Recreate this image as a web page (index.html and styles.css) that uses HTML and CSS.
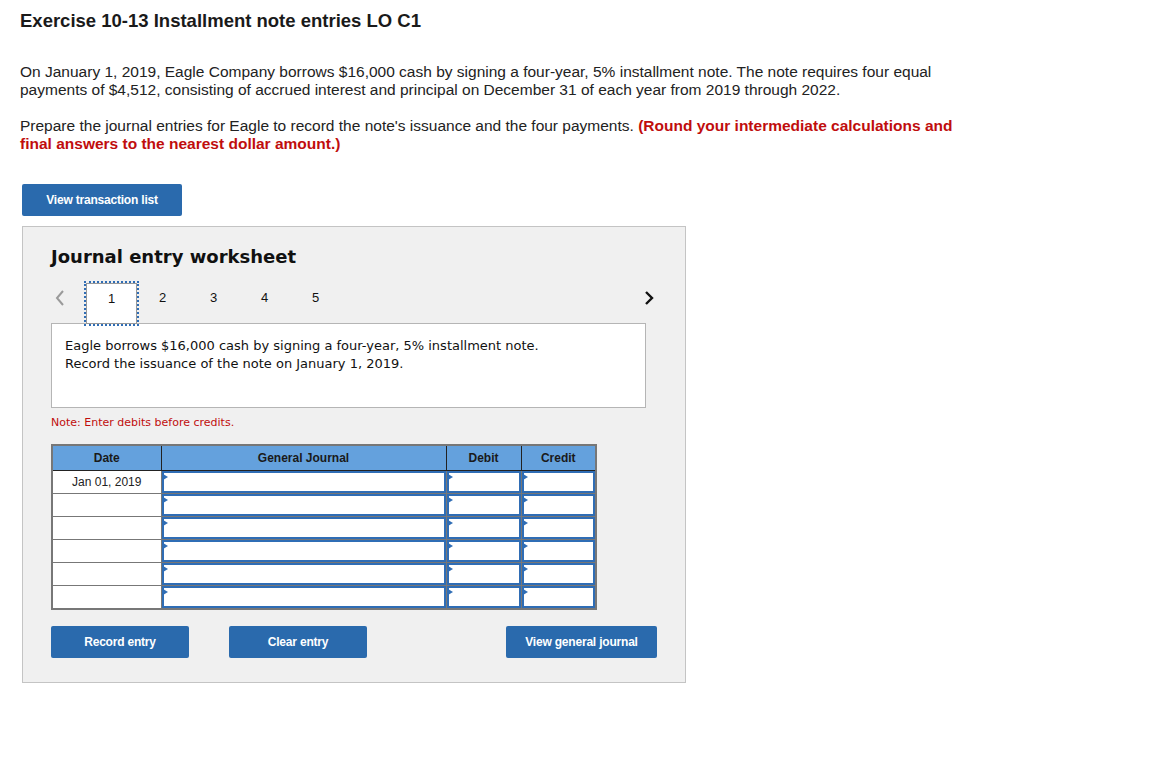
FILE: index.html
```html
<!DOCTYPE html>
<html>
<head>
<meta charset="utf-8">
<link rel="stylesheet" href="styles.css">
</head>
<body>
<div class="page">
  <h1 class="title">Exercise 10-13 Installment note entries LO C1</h1>
  <p class="para">On January 1, 2019, Eagle Company borrows $16,000 cash by signing a four-year, 5% installment note. The note requires four equal payments of $4,512, consisting of accrued interest and principal on December 31 of each year from 2019 through 2022.</p>
  <p class="para para2">Prepare the journal entries for Eagle to record the note's issuance and the four payments. <strong class="red">(Round your intermediate calculations and final answers to the nearest dollar amount.)</strong></p>
  <button class="btn btn-list">View transaction list</button>

  <div class="panel">
    <h2 class="ws-title">Journal entry worksheet</h2>
    <div class="pager">
      <span class="chev chev-left"><svg width="12" height="18" viewBox="0 0 12 18"><polyline points="9,2 3,9 9,16" fill="none" stroke="#9a9a9a" stroke-width="2"/></svg></span>
      <span class="tab tab-active">1</span>
      <span class="tab">2</span>
      <span class="tab">3</span>
      <span class="tab">4</span>
      <span class="tab">5</span>
      <span class="chev chev-right"><svg width="12" height="16" viewBox="0 0 12 16"><polyline points="3,2 9,8 3,14" fill="none" stroke="#111" stroke-width="2.4"/></svg></span>
    </div>
    <div class="desc">
      Eagle borrows $16,000 cash by signing a four-year, 5% installment note.<br>
      Record the issuance of the note on January 1, 2019.
    </div>
    <p class="note">Note: Enter debits before credits.</p>
    <table class="journal">
      <colgroup><col class="c-date"><col class="c-gj"><col class="c-amt"><col class="c-amt"></colgroup>
      <thead>
        <tr><th>Date</th><th>General Journal</th><th>Debit</th><th>Credit</th></tr>
      </thead>
      <tbody>
        <tr><td class="date">Jan 01, 2019</td><td><div class="inp"></div></td><td><div class="inp"></div></td><td><div class="inp"></div></td></tr>
        <tr><td class="date"></td><td><div class="inp"></div></td><td><div class="inp"></div></td><td><div class="inp"></div></td></tr>
        <tr><td class="date"></td><td><div class="inp"></div></td><td><div class="inp"></div></td><td><div class="inp"></div></td></tr>
        <tr><td class="date"></td><td><div class="inp"></div></td><td><div class="inp"></div></td><td><div class="inp"></div></td></tr>
        <tr><td class="date"></td><td><div class="inp"></div></td><td><div class="inp"></div></td><td><div class="inp"></div></td></tr>
        <tr><td class="date"></td><td><div class="inp"></div></td><td><div class="inp"></div></td><td><div class="inp"></div></td></tr>
      </tbody>
    </table>
    <div class="actions">
      <button class="btn btn-act">Record entry</button>
      <button class="btn btn-act">Clear entry</button>
      <button class="btn btn-act btn-view">View general journal</button>
    </div>
  </div>
</div>
</body>
</html>
```

FILE: styles.css
```css
* { box-sizing: border-box; }
body {
  margin: 0;
  background: #fff;
  color: #1a1a1a;
  font-family: "Liberation Sans", Arial, sans-serif;
}
.page {
  padding: 11px 0 0 20px;
}
.title {
  margin: 0;
  font-size: 18.5px;
  line-height: 20px;
  font-weight: bold;
  color: #1a1a1a;
}
.para {
  margin: 32px 0 0;
  width: 940px;
  font-size: 15.5px;
  line-height: 18px;
  color: #222;
}
.para2 { margin-top: 18px; }
.red { color: #c00d0d; font-weight: bold; }
.btn {
  display: block;
  border: none;
  border-radius: 2px;
  background: #2a6aad;
  color: #fff;
  font-family: "Liberation Sans", Arial, sans-serif;
  font-weight: bold;
  font-size: 12px;
  height: 32px;
  padding: 0;
  letter-spacing: -0.2px;
}
.btn-list {
  margin: 31px 0 0 2px;
  width: 160px;
}
.panel {
  margin: 10px 0 0 2px;
  width: 664px;
  background: #f0f0f0;
  border: 1px solid #c4c4c4;
  padding: 19px 39px 24px 28px;
}
.ws-title {
  margin: 0;
  font-family: "DejaVu Sans", Verdana, sans-serif;
  font-size: 18px;
  line-height: 22px;
  font-weight: bold;
  color: #111;
}
.pager {
  display: flex;
  align-items: flex-start;
  height: 42px;
  margin-top: 13px;
  width: calc(100% + 16px);
  font-family: "Liberation Sans", Arial, sans-serif;
  font-size: 13px;
  color: #111;
}
.chev {
  display: flex;
  align-items: center;
  height: 34px;
}
.chev-left { width: 35px; padding-left: 3px; }
.chev-right { margin-left: auto; padding-right: 7px; }
.tab {
  width: 51px;
  height: 32px;
  padding-top: 10px;
  text-align: center;
  line-height: 14px;
}
.tab-active {
  position: relative;
  z-index: 1;
  margin-top: 2px;
  height: 41px;
  padding-top: 8px;
  background: #fff;
  border: 1px solid #999;
  outline: 2px dotted #2f6db5;
}
.desc {
  height: 85px;
  background: #fff;
  border: 1px solid #b5b5b5;
  padding: 13px 13px 0;
  font-family: "DejaVu Sans", Verdana, sans-serif;
  font-size: 13px;
  line-height: 18px;
  color: #111;
}
.note {
  margin: 8px 0 0;
  font-family: "DejaVu Sans", Verdana, sans-serif;
  font-size: 11px;
  line-height: 14px;
  color: #c00d0d;
}
.journal {
  margin-top: 14px;
  width: 544px;
  border-collapse: collapse;
  table-layout: fixed;
  border: 2px solid #777;
  font-family: "Liberation Sans", Arial, sans-serif;
  font-size: 12px;
}
.c-date { width: 109px; }
.c-gj { width: 285px; }
.c-amt { width: 75px; }
.journal th {
  height: 25px;
  background: #64a1dd;
  border: 1px solid #222;
  border-top: 2px solid #777;
  font-weight: bold;
  color: #1a1a1a;
  padding: 0;
}
.journal th:first-child { border-left: 2px solid #777; }
.journal th:last-child { border-right: 2px solid #777; }
.journal td {
  height: 23px;
  padding: 0;
  border: 1px solid #777;
  background: #fff;
}
.journal td.date {
  text-align: center;
  color: #222;
  font-size: 12px;
}
.inp {
  position: relative;
  height: 22px;
  border: 2px solid #2f6db5;
  background: #fff;
}
.inp::before {
  content: "";
  position: absolute;
  left: -1px;
  top: 1px;
  border-left: 5px solid #2f6db5;
  border-top: 3px solid transparent;
  border-bottom: 3px solid transparent;
}
.actions {
  display: flex;
  margin-top: 16px;
  width: calc(100% + 11px);
}
.btn-act { width: 138px; }
.btn-act + .btn-act { margin-left: 40px; }
.btn-view { margin-left: auto !important; width: 151px; }
```
